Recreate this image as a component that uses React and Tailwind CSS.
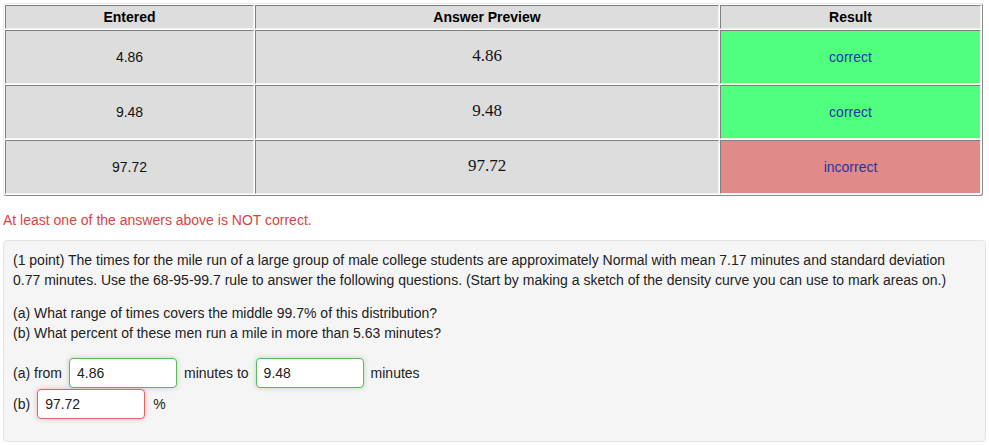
import React from 'react';

const rows = [
  { entered: '4.86', preview: '4.86', ok: true },
  { entered: '9.48', preview: '9.48', ok: true },
  { entered: '97.72', preview: '97.72', ok: false },
];

const cell = 'border border-t-[#808080] border-l-[#808080] border-r-[#f4f4f4] border-b-[#f4f4f4] text-center align-middle';

const AnswerInput = ({ value, ok }) => (
  <div
    className={`w-[108px] h-[30px] bg-white rounded-[4px] border px-[7px] flex items-center text-[14px] text-[#222] ${
      ok
        ? 'border-[#5cb85c] shadow-[0_0_5px_rgba(92,184,92,0.45)]'
        : 'border-[#e06666] shadow-[0_0_5px_rgba(224,102,102,0.45)]'
    }`}
  >
    {value}
  </div>
);

const App = () => {
  return (
    <div className="w-[989px] h-[446px] bg-white px-[3px] pt-[3px] font-['Liberation_Sans',Arial,sans-serif] text-[14px] text-[#222]">
      <table className="w-[980px] table-fixed border-separate border-spacing-[1px] border border-t-[#ececec] border-l-[#ececec] border-r-[#8a8a8a] border-b-[#8a8a8a] rounded-[3px]">
        <colgroup>
          <col className="w-[249px]" />
          <col className="w-[464px]" />
          <col className="w-[261px]" />
        </colgroup>
        <thead>
          <tr>
            <th className={`${cell} h-[24px] bg-[#dddddd] font-bold text-black`}>Entered</th>
            <th className={`${cell} h-[24px] bg-[#dddddd] font-bold text-black`}>Answer Preview</th>
            <th className={`${cell} h-[24px] bg-[#dddddd] font-bold text-black`}>Result</th>
          </tr>
        </thead>
        <tbody>
          {rows.map((r) => (
            <tr key={r.entered}>
              <td className={`${cell} h-[54px] bg-[#dddddd] text-[#111]`}>{r.entered}</td>
              <td className={`${cell} h-[54px] bg-[#dddddd] text-[17px] text-[#111] font-['Liberation_Serif','Times_New_Roman',serif] pb-[2px]`}>
                {r.preview}
              </td>
              <td
                className={`${cell} h-[54px] ${r.ok ? 'bg-[#51ff7e]' : 'bg-[#e08a8a]'} text-[#2236a6]`}
              >
                {r.ok ? 'correct' : 'incorrect'}
              </td>
            </tr>
          ))}
        </tbody>
      </table>

      <p className="mt-[14px] leading-[20px] text-[#d94444]">
        At least one of the answers above is NOT correct.
      </p>

      <div className="mt-[10px] h-[202px] bg-[#f5f5f5] border border-[#e3e3e3] rounded-[4px] pl-[9px] pr-[9px] pt-[9px] leading-[20px] text-[#222]">
        <p className="mb-[13px]">
          (1 point) The times for the mile run of a large group of male college students are approximately Normal with mean 7.17 minutes and standard deviation 0.77 minutes. Use the 68-95-99.7 rule to answer the following questions. (Start by making a sketch of the density curve you can use to mark areas on.)
        </p>
        <p>
          (a) What range of times covers the middle 99.7% of this distribution?
          <br />
          (b) What percent of these men run a mile in more than 5.63 minutes?
        </p>

        <div className="mt-[15px] flex items-center gap-[7px]">
          <span>(a) from</span>
          <AnswerInput value="4.86" ok />
          <span>minutes to</span>
          <AnswerInput value="9.48" ok />
          <span>minutes</span>
        </div>
        <div className="mt-[1px] flex items-center gap-[7px]">
          <span>(b)</span>
          <AnswerInput value="97.72" ok={false} />
          <span className="ml-[1px]">%</span>
        </div>
      </div>
    </div>
  );
};

export default App;
